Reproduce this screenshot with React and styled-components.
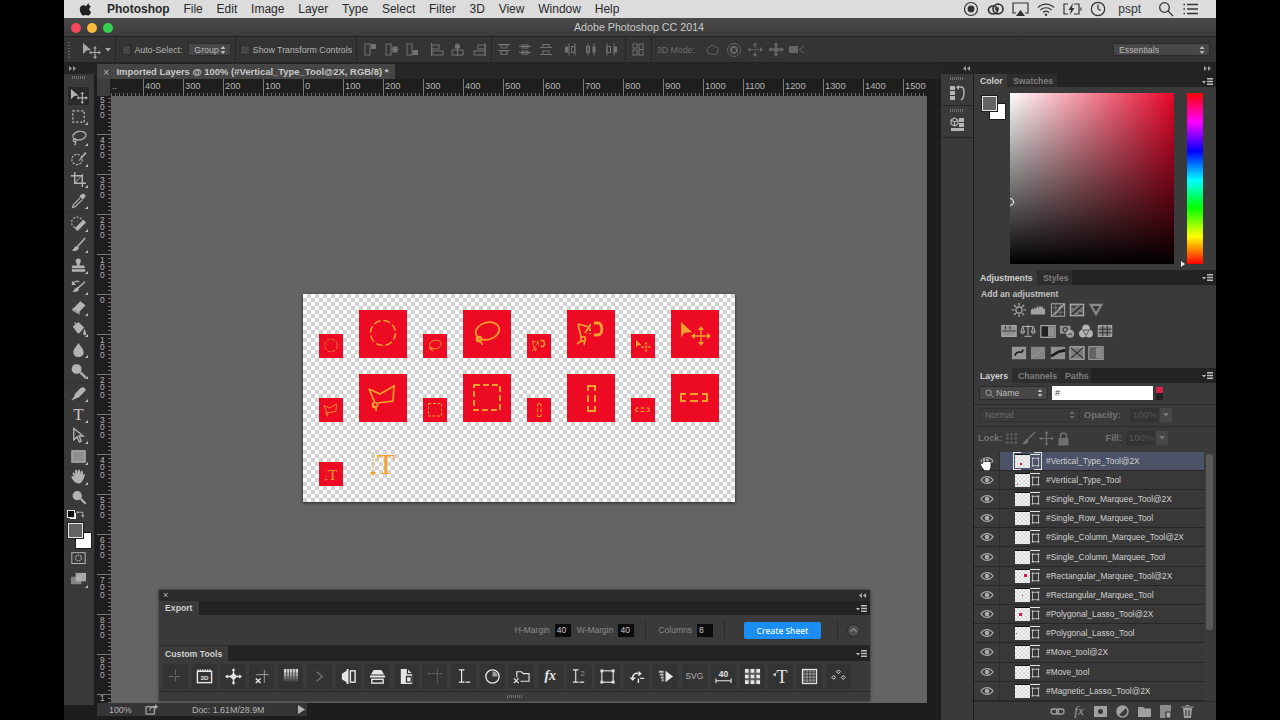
import * as React from 'react';
import styled, { createGlobalStyle } from 'styled-components';

const GlobalStyle = createGlobalStyle`
  html, body { margin: 0; padding: 0; background: #000; height: 100%; overflow: hidden; }
  body { font-family: 'Liberation Sans', Arial, sans-serif; }
  * { box-sizing: border-box; }
`;

const ORANGE = '#f2a02e';

const Screen = styled.div`
  width: 1152px;
  height: 720px;
  margin: 0 auto;
  display: flex;
  flex-direction: column;
  background: #1d1d1d;
  overflow: hidden;
`;

const MenuBar = styled.div`
  height: 18px;
  flex: none;
  display: flex;
  align-items: center;
  padding-left: 16px;
  background: #dcdcdc;
  color: #2a2a2a;
  font-size: 12px;
`;
const MenuItem = styled.span`
  margin-left: ${(p) => p.$gap ?? 13.8}px;
  margin-right: ${(p) => p.$after || 0}px;
  font-weight: ${(p) => (p.$bold ? 700 : 400)};
  white-space: nowrap;
`;
const MenuRight = styled.div`
  margin-left: auto;
  margin-right: 17px;
  display: flex;
  align-items: center;
  gap: 8px;
  color: #333;
`;

const TitleBar = styled.div`
  height: 19px;
  flex: none;
  position: relative;
  display: flex;
  align-items: center;
  justify-content: center;
  padding-right: 2px;
  background: linear-gradient(#4a4a4a, #3b3b3b);
  border-bottom: 1px solid #222;
  color: #c9c9c9;
  font-size: 10.7px;
`;
const Lights = styled.div`
  position: absolute;
  left: 7px;
  top: 5px;
  display: flex;
  gap: 6px;
`;
const Light = styled.i`
  display: block;
  width: 10px;
  height: 10px;
  border-radius: 50%;
  background: ${(p) => p.$c};
`;

const OptionsBar = styled.div`
  height: 26px;
  flex: none;
  display: flex;
  align-items: center;
  background: #343434;
  border-bottom: 1px solid #202020;
  color: #b4b4b4;
  font-size: 8.8px;
  padding-left: 4px;
  padding-right: 6px;
`;
const VGrip = styled.div`
  width: 2px;
  height: 16px;
  margin-right: 12px;
  background: repeating-linear-gradient(#666 0 1px, transparent 1px 3px);
`;
const OptSep = styled.div`
  width: 1px;
  height: 26px;
  margin: ${(p) => p.$m};
  background: #262626;
`;
const Check = styled.i`
  display: block;
  width: 10px;
  height: 10px;
  margin-right: 3px;
  background: #464646;
  border: 1px solid #2a2a2a;
`;
const OptLabel = styled.span`
  white-space: nowrap;
  margin-left: ${(p) => p.$ml || 0}px;
  margin-right: ${(p) => p.$mr || 0}px;
  color: ${(p) => p.$c || 'inherit'};
`;
const Select = styled.div`
  width: ${(p) => p.$w}px;
  height: ${(p) => p.$h || 13}px;
  display: flex;
  flex: none;
  align-items: center;
  justify-content: space-between;
  padding: 0 4px 0 5px;
  background: ${(p) => (p.$off ? '#3a3a3a' : '#474747')};
  border: 1px solid ${(p) => (p.$off ? '#303030' : '#2b2b2b')};
  border-radius: 2px;
  color: ${(p) => (p.$off ? '#6c6c6c' : '#b9b9b9')};
  font-size: 8.8px;
  font-weight: 400;
  margin-left: ${(p) => p.$ml || 0}px;
`;
const AlignSlot = styled.div`
  width: ${(p) => p.$w || 21}px;
  margin-left: ${(p) => p.$ml || 0}px;
  display: flex;
  justify-content: center;
  flex: none;
  color: ${(p) => p.$c || '#737373'};
`;

const Svg = styled.svg`
  display: block;
  flex: none;
  fill: none;
  stroke: currentColor;
  stroke-width: ${(p) => p.$sw || 1.2};
  overflow: visible;
  color: ${(p) => p.$c || 'inherit'};
`;
const GlyphText = styled.text`
  font-family: 'Liberation Serif', serif;
  fill: currentColor;
  stroke: none;
`;
const GlyphSans = styled.text`
  font-family: 'Liberation Sans', sans-serif;
  fill: currentColor;
  stroke: none;
`;

const F = { fill: 'currentColor', stroke: 'none' };

const icons = {
  apple: <path {...F} d="M11.4 1c.1 1-.3 1.800-.8 2.400-.6.700-1.400 1.100-2.200 1-.1-.9.300-1.800.8-2.400C9.800 1.400 10.700 1 11.400 1zM14 11.600c-.4.900-.6 1.300-1.100 2.100-.7 1.100-1.700 2.400-2.900 2.400-1.100 0-1.400-.7-2.800-.7s-1.800.7-2.900.7c-1.200 0-2.100-1.200-2.800-2.300C-.5 10.700-.7 7.100.5 5.300c.9-1.300 2.200-2 3.500-2 1.300 0 2.100.7 3.200.7 1 0 1.700-.7 3.200-.7 1.100 0 2.400.6 3.200 1.700-2.800 1.600-2.400 5.600.4 6.600z" />,
  rec: <g><circle cx="8" cy="8" r="6.500" /><circle {...F} cx="8" cy="8" r="3.400" /></g>,
  cc: <g><ellipse cx="5.500" cy="9" rx="4.500" ry="4" strokeWidth="1.700" /><ellipse cx="10.500" cy="8" rx="5" ry="4.800" strokeWidth="1.700" /><circle {...F} cx="9.500" cy="8" r="2" /></g>,
  airplay: <g><path d="M4 12H1V2h15v10h-3" /><path {...F} d="M8.500 9l4.500 6H4z" /></g>,
  wifi: <g strokeWidth="1.200"><path d="M1 6.500c4.500-4.500 11.500-4.500 16 0M3.500 9c3-3 8-3 11 0M6 11.500c1.700-1.500 4.300-1.500 6 0" /><circle {...F} cx="9" cy="13.800" r="1.200" /></g>,
  battery: <g><path d="M5 3H1v10h4M11 3h5v10h-5M18 6.500v3" /><path {...F} d="M10 2L5.500 9H8l-1 5 4.500-7H9z" /></g>,
  clock: <g><circle cx="8" cy="8" r="6.700" /><path d="M8 3.500V8l2.800 1.500" /></g>,
  search: <g strokeWidth="1.300"><circle cx="6.500" cy="6.500" r="4.800" /><path d="M10 10l5 5" /></g>,
  list: <g strokeWidth="1.300"><path d="M5 3.500h11M5 8h11M5 12.500h11" /><path d="M1.500 3.500h1.500M1.500 8h1.500M1.500 12.500h1.500" /></g>,
  updown: <path {...F} d="M3 0l2.500 3H.5zM3 8L.5 5h5z" />,
  down: <path {...F} d="M0 0h6L3 3.500z" />,
  dblR: <path {...F} d="M0 0l3 2.500L0 5zM4 0l3 2.500L4 5z" />,
  dblL: <path {...F} d="M3 0L0 2.500 3 5zM7 0L4 2.500 7 5z" />,
  panelMenu: <g><path {...F} d="M0 3h4L2 5.500zM5 0h6v1.500H5zM5 2.800h6v1.500H5zM5 5.600h6v1.500H5z" /></g>,

  move: <g><path {...F} d="M1 2v11l3.500-3.500L9 9z" /><path d="M13 7v9M8.500 11.500h9" /><path {...F} d="M13 5l2 2.500h-4zM13 18l-2-2.500h4zM7 11.500l2.500-2v4zM19 11.500l-2.500 2v-4z" /></g>,
  marquee: <rect x="3" y="3" width="12" height="12" strokeWidth="1.400" strokeDasharray="2.500 1.800" />,
  lasso: <g strokeWidth="1.300"><ellipse cx="10" cy="7" rx="7" ry="4.500" transform="rotate(-10 10 7)" /><circle cx="5" cy="12" r="1.600" /><path d="M5.500 13.500c1 1.500 0 3-1 3.500" /></g>,
  quick: <g><circle cx="7.500" cy="10" r="5.500" strokeWidth="1.300" strokeDasharray="2.200 1.500" /><path {...F} d="M16 2l1.500 1.500L11 10.500 8.500 12z" /></g>,
  crop: <g strokeWidth="1.500"><path d="M5 1v12h12M1 5h12v12" /><path d="M14 3L4 14" strokeWidth="1" /></g>,
  eyedrop: <g><path {...F} d="M12 2.500c1-1 2.500-1 3.500 0s1 2.500 0 3.500l-2 2-3.500-3.500z" /><path d="M11 6l-7.500 7.500-.8 2.800 2.800-.8L13 8" /></g>,
  heal: <g><circle cx="7.500" cy="8" r="5.800" strokeWidth="1.200" strokeDasharray="2.200 1.500" /><path {...F} d="M14 5l3 3-9 9-3-3z" /></g>,
  brush: <g><path d="M16 2L8 11" strokeWidth="1.600" /><path {...F} d="M7.500 10.500c-3 0-3 3-5.500 5 3 1 6.500 0 7.500-3z" /></g>,
  stamp: <g><path {...F} d="M9 1.500c1.500 0 2.500 1 2.500 2.500 0 2-1.500 3-1.500 5h4c1 0 1.500.5 1.500 1.500V12H2v-1.500C2 9.500 2.500 9 3.500 9h4c0-2-1.500-3-1.500-5 0-1.500 1.500-2.500 3-2.500zM2 13h14v2.500H2z" /></g>,
  historyB: <g><path d="M16 4L8 11" strokeWidth="1.500" /><path {...F} d="M8 10c-3 0-3 3-5.500 4.500 3 1 6.500 0 7-2.500z" /><path d="M3 6c2-2.500 5-3 7-2" /><path {...F} d="M2 3v4.500h4.500z" /></g>,
  eraser: <g><path {...F} d="M11 2.500l5.500 4-7 7.500-6-4z" /><path d="M3.500 10l6 4 0 1.500-6.500-3.500z" /></g>,
  bucket: <g><path {...F} d="M3 7l6-5 6 6-5 6H8zM15 9c1 2.500 2.500 4 2 6-.5 1.500-2.500 1.500-3 0-.3-1.500 1-3 1-6z" /><path d="M5 2.500l3 4" /></g>,
  blur: <path {...F} d="M9 2c1.500 3 5.500 6 5.500 10 0 3-2.500 5-5.500 5s-5.500-2-5.500-5C3.500 8 7.500 5 9 2z" />,
  smudge: <g><circle {...F} cx="7" cy="7.500" r="5.200" /><path d="M11 11l5.500 5.500" strokeWidth="2.400" /></g>,
  pen: <g><path {...F} d="M14 2l3 3-2 2.500-5.500 5.500-6.500 2.500 2.500-6.500L11 3.500z" /><path d="M2 16l5-5" /></g>,
  direct: <path strokeWidth="1.400" d="M4 1.500v12l3.500-3 2.500 5.500 2-1-2.500-5.500h4.500z" />,
  rectT: <g><rect {...F} x="2" y="3" width="14" height="12" opacity="0.700" /><rect x="2" y="3" width="14" height="12" /></g>,
  hand: <g><path {...F} d="M5 9c-1-2-3-4-2-5s2 .5 3 2c-1-3-1-4.500 0-5s2 1 2.500 4c0-3 0-4.500 1-4.500s1.500 1.500 1.500 4.500c.5-2 1-3.500 2-3s1 2 .5 5l1-1.500c1-.5 1.500 .5 1 2-1 3-2 6-5 7.500-3 1-6-1-7.500-3.500C2 10 1 8 2 7.500S4 8 5 9z" /></g>,
  screen: <g><rect {...F} x="1" y="6" width="11" height="8" opacity="0.600" /><rect {...F} x="6" y="2" width="11" height="9" opacity="0.900" /></g>,
  qmask: <g><rect x="1" y="2" width="16" height="13" /><circle cx="9" cy="8.500" r="3.500" strokeDasharray="2 1" strokeWidth="1.400" /></g>,
  swap: <g><path d="M3 3h6v5" /><path {...F} d="M9 10L6.500 7h5zM0 3l3-2v4z" /></g>,

  a1: <g><rect x="3" y="2" width="5" height="11" /><rect {...F} x="9" y="2" width="5" height="5" /></g>,
  a2: <g><rect x="3" y="2" width="5" height="11" /><rect {...F} x="9.500" y="4.500" width="5" height="6" /><path d="M8 7.500h8" /></g>,
  a3: <g><rect x="3" y="2" width="5" height="11" /><rect {...F} x="9" y="8" width="5" height="5" /></g>,
  a4: <g><path d="M3.500 1v13" /><rect x="4" y="3" width="7" height="4" /><rect x="4" y="9" width="11" height="4" /></g>,
  a5: <g><path d="M8.500 1v13" /><rect {...F} x="6" y="2.500" width="5" height="4" /><rect x="3" y="8" width="11" height="5" /></g>,
  a6: <g><path d="M15 1v13" /><rect x="8" y="3" width="7" height="4" /><rect x="4" y="9" width="11" height="4" /></g>,
  d1: <g><path d="M3 2.500h12M3 8.500h12" /><rect x="6" y="3" width="6" height="3" /><rect x="6" y="9" width="6" height="3.500" /></g>,
  d2: <g><path d="M3 4.500h12M3 10.500h12" /><rect x="6" y="3" width="6" height="3" /><rect x="6" y="9" width="6" height="3" /></g>,
  d3: <g><path d="M3 5.500h12M3 12.500h12" /><rect x="6" y="2.500" width="6" height="3" /><rect x="6" y="9" width="6" height="3.500" /></g>,
  h1: <g transform="rotate(90 9 7.500)"><path d="M3 2.500h12M3 8.500h12" /><rect x="6" y="3" width="6" height="3" /><rect {...F} x="6" y="9" width="6" height="3.500" /></g>,
  h2: <g transform="rotate(90 9 7.500)"><path d="M3 4.500h12M3 10.500h12" /><rect {...F} x="6" y="3" width="6" height="3" /><rect x="6" y="9" width="6" height="3" /></g>,
  h3: <g transform="rotate(90 9 7.500)"><path d="M3 5.500h12M3 12.500h12" /><rect {...F} x="6" y="2.500" width="6" height="3" /><rect x="6" y="9" width="6" height="3.500" /></g>,
  d4: <g><rect x="4" y="2" width="4" height="4" /><rect x="4" y="8" width="4" height="5" /><rect x="10" y="2" width="4" height="11" /><path d="M10 7.500h4" /></g>,
  m1: <g><path d="M3 8c0-3 4-3 5-5 2 0 2 2 4 2 3 0 3 3 1 4 2 3-2 4-4 3-3 1-6-1-6-4z" /></g>,
  m2: <g><circle cx="9" cy="8" r="6.500" /><circle cx="9" cy="8" r="3" strokeWidth="2" /></g>,
  m3: <g><path strokeDasharray="2 1" d="M9 1v13M2 7.500h14" /><path {...F} d="M9 .5l2.500 3h-5zM9 15l-2.500-3h5zM1.500 7.500l3-2.500v5zM17 7.500l-3 2.500V5z" /></g>,
  m4: <g><path d="M9 1v13M2 7.500h14" strokeWidth="1.800" /><circle {...F} cx="9" cy="7.500" r="2.500" /><path {...F} d="M9 .5l2.500 3h-5zM9 15l-2.500-3h5zM1.500 7.500l3-2.500v5zM17 7.500l-3 2.500V5z" /></g>,
  m5: <g><rect {...F} x="1" y="4" width="9" height="7" /><path d="M11 7.500l5-3.500M11 7.500l5 3.500" /></g>,

  ctCross: <g strokeWidth="1"><path d="M9 2v14M2 9h14" strokeDasharray="5 2" /></g>,
  ct3d: <g><rect x="1.500" y="3.500" width="15" height="12" strokeWidth="1.500" /><path d="M1.500 2.500h15" strokeDasharray="1.500 1" strokeWidth="1.600" /><GlyphSans x="9" y="13" fontSize="6.500" textAnchor="middle" fontWeight="700">3D</GlyphSans></g>,
  ctStar: <g><path d="M9 1v16M1 9h16" strokeWidth="1.400" /><path {...F} d="M9 5l4 4-4 4-4-4z" /><path {...F} d="M9 0l2 3H7zM9 18l-2-3h4zM0 9l3-2v4zM18 9l-3 2V7z" /></g>,
  ctX: <g><path d="M12 2v14M3 7h14" strokeWidth="1" opacity="0.600" /><path d="M3 11l5 5M8 11l-5 5" strokeWidth="1.500" /></g>,
  ctGrid: <g>
    <rect {...F} x="2" y="1" width="15" height="4" opacity="0.900" />
    <rect {...F} x="2" y="5" width="15" height="4" opacity="0.600" />
    <rect {...F} x="2" y="9" width="15" height="3" opacity="0.350" />
    <rect {...F} x="2" y="12" width="15" height="2" opacity="0.180" />
    <path stroke="#383838" strokeWidth="0.800" d="M5 1v13M8 1v13M11 1v13M14 1v13" />
  </g>,
  ctChev: <path strokeWidth="1.500" d="M6 4l6 5-6 5" />,
  ctMirH: <g><path {...F} d="M2 6l5-3v12l-5-3zM7 1h2v16H7z" /><rect x="11" y="3" width="5" height="12" strokeWidth="1.500" /></g>,
  ctMirV: <g><path {...F} d="M5 2h8l3 5H2zM1 8h16v2H1z" /><rect x="3" y="12" width="12" height="4" strokeWidth="1.500" /></g>,
  ctDoc: <g><path {...F} d="M3 1h7l5 5v11H3z" /><path stroke="#383838" strokeWidth="1.400" d="M9 9h5v6H9zM10 1v5h5" /></g>,
  ctDim: <g strokeWidth="1"><path d="M12 1v15M2 6h15" strokeDasharray="3 1" /></g>,
  ctI: <g strokeWidth="1.300"><path d="M4 2h6M7 2v13M4 15h6M11 15h5" /></g>,
  ctPie: <g><circle cx="9" cy="9" r="7" strokeWidth="1.400" /><path {...F} opacity="0.600" d="M9 9V3.500A5.500 5.500 0 0 1 14.500 9z" /></g>,
  ctFold: <g strokeWidth="1.200"><path d="M4 10V4h5l2 2h6v8H8" /><path strokeWidth="1.400" d="M1 11l5 5M6 11l-5 5" /></g>,
  ctI2: <g><path strokeWidth="1.200" d="M2 2h6M5 2v13M2 15h6M9 15h5" /><GlyphSans x="10" y="8" fontSize="8" opacity="0.500">2</GlyphSans></g>,
  ctRect: <g><rect x="3" y="3" width="12" height="12" strokeWidth="1.200" /><path {...F} d="M1.500 1.500h3v3h-3zM13.500 1.500h3v3h-3zM1.500 13.500h3v3h-3zM13.500 13.500h3v3h-3z" /></g>,
  ctRot: <g strokeWidth="1.500"><path d="M5 11c-.5-4 3-6.500 6-5" /><path {...F} d="M11 3l3.500 3L11 9zM1.500 10h7l-3.500 3.500z" /><path d="M11 11v5M13 11h4" /></g>,
  ctFwd: <g><path {...F} d="M9 3l8 6-8 6z" /><path {...F} opacity="0.800" d="M2 3h5v2H2zM3 6h4v2H3zM4 9h3v2H4zM5 12h2v2H5z" /></g>,
  ctMeasure: <g strokeWidth="1.200"><path d="M1 11v5M17 11v5M1 13.500h16" /><GlyphSans x="9" y="9" fontSize="9" fontWeight="700" textAnchor="middle">40</GlyphSans></g>,
  ctSq: <g><rect {...F} x="1" y="1" width="16" height="16" /><path stroke="#383838" strokeWidth="2.200" opacity="0.800" d="M6 1v16M12 1v16M1 6h16M1 12h16" /></g>,
  ctT: <g><GlyphText x="10.500" y="15.500" fontSize="19" textAnchor="middle">T</GlyphText><path {...F} d="M1 7l3-2v4z" /></g>,
  ctTable: <g><rect {...F} opacity="0.500" x="1.500" y="1.500" width="15" height="15" /><path stroke="#3a3a3a" strokeWidth="0.800" d="M4.500 1v16M8 1v16M11.500 1v16M15 1v16M1 4.500h16M1 8h16M1 11.500h16M1 15h16" /><rect x="1.500" y="1.500" width="15" height="15" /></g>,
  ctDia: <g strokeWidth="1"><path d="M9 2l2 2-2 2-2-2zM4 8l2 2-2 2-2-2zM14 8l2 2-2 2-2-2z" /></g>,

  hist: <g><path {...F} d="M1 1h5v4H1zM1 6h5v4H1zM1 11h5v4H1z" /><path strokeWidth="1.500" d="M8 2h4c2 0 3 2 3 5 0 4-1 7-3 8" /><path {...F} d="M10 0v5l-3-2.500z" /></g>,
  props: <g><path {...F} d="M9 1h5v4H9zM9 6h5v4H9zM1 11h13v3H1z" /><path d="M4.500 1L8 3v4L4.500 9 1 7V3zM1 3l3.500 2L8 3M4.500 5v4" /></g>,

  adjSun: <g><circle cx="9" cy="9" r="3.500" /><path strokeWidth="1.400" d="M9 1v3M9 14v3M1 9h3M14 9h3M3.300 3.300l2.200 2.200M12.500 12.500l2.200 2.200M3.300 14.700l2.200-2.200M12.500 5.500l2.200-2.200" /></g>,
  adjLevels: <path {...F} d="M1 14V9l2-2 1 2 1-3 2 2 1-4 2 3 1-3 2 2 1-1 1 3 2-1v7z" opacity="0.850" />,
  adjCurves: <g strokeWidth="1"><rect x="1.500" y="2" width="15" height="14" /><path d="M6.500 2v14M11.500 2v14M1.500 6.500h15M1.500 11.500h15" opacity="0.500" /><path strokeWidth="1.400" d="M2 15c5 0 8-9 14-12" /></g>,
  adjExpo: <g><rect {...F} x="1.500" y="2.500" width="15" height="13" opacity="0.450" /><rect x="1.500" y="2.500" width="15" height="13" /><path stroke="#222" strokeWidth="1.400" d="M3 14L15 4M3 5.500h4M11 12.500h4" /></g>,
  adjVib: <path stroke="none" fill="#8b8b8b" d="M1 2h16L9 16zm4 2.500L9 11l4-6.500z" />,
  adjHue: <g><rect {...F} x="1" y="3" width="16" height="12" opacity="0.700" /><rect x="1" y="3" width="16" height="12" /><path stroke="#333" strokeWidth="1.200" d="M5 3v4M10 3v4" /><path stroke="#333" strokeWidth="1" d="M1 9h16" /></g>,
  adjBal: <g strokeWidth="1.100"><path d="M9 2v12M5 15h8M3 4h12" /><path d="M3 4L1 10h4zM15 4l-2 6h4zM1 10c0 2.500 4 2.500 4 0M13 10c0 2.500 4 2.500 4 0" /></g>,
  adjBW: <g><rect x="1" y="3" width="16" height="13" strokeWidth="1.300" /><rect fill="#222" stroke="none" x="2" y="4" width="7" height="11" /><rect {...F} x="9" y="4" width="7" height="11" opacity="0.700" /></g>,
  adjPhoto: <g><rect {...F} opacity="0.700" x="1" y="3" width="12" height="9" /><circle cx="7" cy="7.500" r="2.500" stroke="#333" /><circle {...F} opacity="0.800" cx="12.500" cy="12" r="4.500" /><path stroke="#333" d="M10.500 12.500h4" /></g>,
  adjMixer: <g><circle {...F} cx="9" cy="6" r="4.300" /><circle {...F} cx="5.500" cy="12" r="4.300" /><circle {...F} cx="12.500" cy="12" r="4.300" /><path stroke="#333" strokeWidth="0.800" d="M5.500 8l7 0M9 14l-3.500-6M9 14l3.500-6" /></g>,
  adjLUT: <g><rect {...F} opacity="0.600" x="1.500" y="3" width="15" height="12" /><rect x="1.500" y="3" width="15" height="12" /><path stroke="#333" d="M6.500 3v12M11.500 3v12M1.500 7h15M1.500 11h15" /></g>,
  adjInv: <g><rect {...F} opacity="0.750" x="1" y="2" width="16" height="14" /><path stroke="#222" strokeWidth="2" d="M5 12c-1-3 3-4 4-4s5 1 4-3" /></g>,
  adjPost: <g><rect {...F} opacity="0.600" x="1" y="2" width="16" height="14" /><path stroke="#8f8f8f" strokeWidth="2" d="M2 14L16 4" /></g>,
  adjThresh: <g><rect {...F} opacity="0.700" x="1" y="2" width="16" height="14" /><path stroke="#1c1c1c" strokeWidth="3" d="M1 12c5 0 4-5 16-6" /></g>,
  adjMap: <g><rect {...F} opacity="0.550" x="1" y="2" width="16" height="14" /><path stroke="#2a2a2a" strokeWidth="1.200" d="M1 2l16 14M17 2L1 16" /><rect x="1" y="2" width="16" height="14" /></g>,
  adjGrad: <g><rect x="1" y="2" width="16" height="14" /><rect {...F} opacity="0.350" x="2" y="3" width="7" height="12" /><rect {...F} opacity="0.650" x="9" y="3" width="7" height="12" /></g>,

  checker: <g><rect {...F} opacity="0.600" x="2" y="2" width="11" height="11" /><path stroke="#383838" strokeWidth="1.500" d="M5.500 2v11M9.500 2v11M2 5.500h11M2 9.500h11" /></g>,
  lockBrush: <g><path strokeWidth="1.500" d="M14 1L6 9" /><path {...F} d="M6 8c-2.500 0-2 3-5 5 3 .5 5.500 0 6.500-3z" /></g>,
  lockMove: <g><path d="M7.500 1v13M1 7.500h13" /><path {...F} d="M7.500 0l2 2.500h-4zM7.500 15l-2-2.500h4zM0 7.500l2.500-2v4zM15 7.500l-2.500 2v-4z" /></g>,
  lock: <g><path strokeWidth="1.500" d="M4.500 7V5c0-4 6-4 6 0v2" /><path {...F} d="M2.500 7h10v7.500h-10z" /></g>,
  eye: <g strokeWidth="1.300"><path d="M1 6c3-4.500 9-4.500 12 0-3 4.500-9 4.500-12 0z" /><circle {...F} cx="7" cy="6" r="2.300" /></g>,
  handCur: <path fill="#fff" stroke="#111" strokeWidth="0.800" d="M3 7V2c0-1.300 2-1.300 2 0v4c0-1.300 2-1.300 2 0 0-1 2-1 2 0 0-.8 2-.8 2 .3v4c0 2-1 4-2 4.500H4.500C3 13 1 10.500.5 9c-.5-1.500 1-2 1.500-1.500z" />,
  mini: <g strokeWidth="1"><rect x="1.500" y="1.500" width="7" height="9" /><path {...F} d="M.5.500h2v2h-2zM7.500.500h2v2h-2zM.5 9.500h2v2h-2zM7.500 9.500h2v2h-2z" /></g>,
  link: <g strokeWidth="1.300"><rect x="1" y="4" width="7.500" height="5" rx="2.500" /><rect x="6.500" y="4" width="7.500" height="5" rx="2.500" /></g>,
  mask: <g><rect {...F} x="1" y="2" width="13" height="11" /><circle cx="7.500" cy="7.500" r="2.500" fill="#383838" stroke="none" /></g>,
  half: <g><circle cx="7.500" cy="7.500" r="5.500" strokeWidth="1.500" /><path {...F} d="M3.500 11.500a5.500 5.500 0 0 1 8-8z" /></g>,
  folder: <path {...F} d="M1 3h5l1.500 1.500H14V13H1z" />,
  fresh: <g><path {...F} d="M2 1h11v13H2z" opacity="0.800" /><path stroke="#383838" fill="#aaa" d="M8 8h5v6H8z" /></g>,
  trash: <g><path {...F} d="M3 4h9l-1 10H4zM1.500 2.500h12V3.500h-12zM6 1h3v1H6z" /><path stroke="#383838" d="M6 6v6M9 6v6" /></g>,
  exportI: <g><rect x="1" y="3" width="9" height="8" /><path {...F} d="M11 0l3 3-3 3z" /><path d="M5 7c0-3 2-4 7-4" /></g>,
  play: <path {...F} d="M0 0l7 4.500L0 9z" />,
};

function Icon({ name, w = 18, h = 18, vw, vh, c, sw }) {
  return (
    <Svg width={w} height={h} viewBox={`0 0 ${vw || w} ${vh || h}`} $c={c} $sw={sw} aria-hidden="true">
      {icons[name]}
    </Svg>
  );
}

const Workspace = styled.div`
  flex: 1;
  min-height: 0;
  display: flex;
`;

/* left tool column */
const ToolColumn = styled.div`
  width: 33px;
  flex: none;
  display: flex;
  flex-direction: column;
`;
const CollapseStrip = styled.div`
  height: 11px;
  flex: none;
  display: flex;
  align-items: center;
  justify-content: ${(p) => p.$justify || 'flex-start'};
  padding: 0 5px 0 ${(p) => p.$pl || 5}px;
  color: #9a9a9a;
  background: #242424;
`;
const ToolBody = styled.div`
  width: 30px;
  height: 631px;
  flex: none;
  display: flex;
  flex-direction: column;
  align-items: stretch;
  background: #3a3a3a;
  color: #b4b4b4;
`;
const HGrip = styled.div`
  height: 3px;
  width: ${(p) => p.$w || 14}px;
  margin: ${(p) => p.$m || '2px auto 6px'};
  flex: none;
  background: repeating-linear-gradient(90deg, #6f6f6f 0 1px, transparent 1px 2px);
`;
const ToolGroup = styled.div`
  display: flex;
  flex-direction: column;
  border-bottom: ${(p) => (p.$last ? 'none' : '1px solid #333')};
  padding-bottom: ${(p) => (p.$last ? 0 : 1)}px;
  margin-top: ${(p) => (p.$last ? -2 : 0)}px;
`;
const ToolBtn = styled.div`
  position: relative;
  width: 21px;
  height: ${(p) => (p.$active ? 18 : p.$h || 21)}px;
  margin: ${(p) => (p.$active ? '1.500px 0 1.500px 4px' : '0 0 0 4px')};
  display: flex;
  align-items: center;
  justify-content: center;
  background: ${(p) => (p.$active ? '#292929' : 'transparent')};
  &::after {
    content: '';
    display: ${(p) => (p.$fly ? 'block' : 'none')};
    position: absolute;
    right: 1px;
    bottom: 2px;
    border-left: 3px solid transparent;
    border-bottom: 3px solid #bdbdbd;
  }
`;
const ToolSerif = styled.span`
  font-family: 'Liberation Serif', serif;
  font-size: 17px;
  line-height: 17px;
  color: #c4c4c4;
`;
const MiniSwatchRow = styled.div`
  height: 11px;
  margin: 1.500px 0 0 0;
  display: flex;
  align-items: center;
  justify-content: space-between;
  width: 21px;
`;
const MiniDefault = styled.div`
  width: 6px;
  height: 6px;
  position: relative;
  background: #fff;
  margin: 3px 0 0 6px;
  &::before {
    content: '';
    position: absolute;
    left: -3px;
    top: -3px;
    width: 6px;
    height: 6px;
    background: #111;
    border: 1px solid #ddd;
  }
`;
const SwatchStack = styled.div`
  position: relative;
  width: ${(p) => p.$w}px;
  height: ${(p) => p.$h}px;
  margin: ${(p) => p.$m};
  flex: none;
`;
const SwatchFg = styled.div`
  position: absolute;
  left: 0;
  top: 0;
  width: ${(p) => p.$s}px;
  height: ${(p) => p.$s}px;
  background: #636363;
  border: 1px solid #e8e8e8;
  outline: 1px solid #1c1c1c;
  z-index: 1;
`;
const SwatchBg = styled.div`
  position: absolute;
  right: 0;
  bottom: 0;
  width: ${(p) => p.$s}px;
  height: ${(p) => p.$s}px;
  background: #fff;
  outline: 1px solid #1c1c1c;
`;

/* document area */
const Center = styled.div`
  width: 844px;
  flex: none;
  display: flex;
  flex-direction: column;
  padding-right: 14px;
`;
const TabRow = styled.div`
  height: 16px;
  flex: none;
  display: flex;
  background: #262626;
  margin-right: -14px;
`;
const DocTab = styled.div`
  width: 298px;
  margin-top: 1px;
  display: flex;
  align-items: center;
  padding-left: 6px;
  background: #454545;
  color: #c8c8c8;
  font-size: 9.450px;
  font-weight: 700;
  white-space: nowrap;
`;
const TabX = styled.span`
  color: #b0b0b0;
  font-size: 11px;
  font-weight: 400;
  margin-right: 7px;
`;
const HRulerRow = styled.div`
  height: 17px;
  flex: none;
  display: flex;
`;
const RulerCorner = styled.div`
  width: 14px;
  flex: none;
  background: #3d3d3d;
  border-right: 1px solid #222;
`;
const HRuler = styled.div`
  flex: 1;
  display: flex;
  overflow: hidden;
  color: #b5b5b5;
  font-size: 9.300px;
  background-color: #1e1e1e;
  background-image: repeating-linear-gradient(90deg, #6a6a6a 0 1px, transparent 1px 4px);
  background-size: 100% 3px;
  background-position: 0 100%;
  background-repeat: no-repeat;
`;
const HCell = styled.div`
  width: ${(p) => p.$w || 40}px;
  flex: none;
  padding: 2px 0 0 1px;
  border-left: ${(p) => (p.$first ? 'none' : '1px solid #777')};
  line-height: 10px;
`;
const DocRow = styled.div`
  height: 607px;
  flex: none;
  display: flex;
`;
const VRuler = styled.div`
  width: 14px;
  flex: none;
  overflow: hidden;
  display: flex;
  flex-direction: column;
  color: #b5b5b5;
  font-size: 8.400px;
  background-color: #1e1e1e;
  background-image: repeating-linear-gradient(#6a6a6a 0 1px, transparent 1px 4px);
  background-size: 3px 100%;
  background-position: 100% 2px;
  background-repeat: no-repeat;
`;
const VCell = styled.div`
  height: 40px;
  flex: none;
  border-top: 1px solid #777;
  padding: 2px 0 0 3px;
  width: 100%;
  &:first-child {
    margin-top: -2px;
  }
  &:last-child {
    height: 9px;
    padding-top: 0;
  }
`;
const VLabel = styled.div`
  width: 6px;
  line-height: 7.300px;
  word-break: break-all;
`;
const DocArea = styled.div`
  position: relative;
  flex: 1;
  background: #646464;
  display: flex;
  justify-content: center;
  align-items: flex-start;
  padding-top: 198px;
`;
const Canvas = styled.div`
  width: 432px;
  height: 208px;
  padding: 16px;
  display: flex;
  flex-wrap: wrap;
  align-items: flex-end;
  align-content: flex-start;
  gap: 16px;
  background-color: #fff;
  background-image: conic-gradient(#d2d2d2 25%, #fbfbfb 0 50%, #d2d2d2 0 75%, #fbfbfb 0);
  background-size: 8px 8px;
  box-shadow: 0 1px 3px rgba(0, 0, 0, 0.6);
`;
const Tile = styled.div`
  width: ${(p) => p.$size}px;
  height: ${(p) => p.$size}px;
  flex: none;
  background: ${(p) => (p.$clear ? 'transparent' : '#ec0b22')};
  color: ${ORANGE};
`;
const SpriteSvg = styled.svg`
  display: block;
  width: 100%;
  height: 100%;
  fill: none;
  stroke: currentColor;
  stroke-width: 1.500;
`;
const sprites = {
  circle: <circle cx="24" cy="23" r="12.500" strokeDasharray="7 2.800" />,
  lasso: <g strokeWidth="1.700"><ellipse cx="24.500" cy="21" rx="12" ry="8.500" transform="rotate(-15 24.500 21)" /><circle cx="16" cy="29" r="2.500" /><path d="M14 28c1 3 6 4 5 7" /></g>,
  magnet: <g strokeWidth="1.700"><path d="M11 14l11 3-4 6" /><path d="M11 14l3 13" /><circle cx="16" cy="29" r="2.300" /><path d="M14 31l-4 3M18 30l-1 5" /><path strokeDasharray="2.500 2" strokeWidth="2" d="M23 14v10" /><path strokeWidth="3" d="M27 13h4c5 0 5 12 0 12h-4" /></g>,
  move: <g strokeWidth="1.300"><path fill={ORANGE} stroke="none" d="M10 12v16l3-5 8-1z" /><path d="M30 18v16M22 26h16" /><path fill={ORANGE} stroke="none" d="M30 16l3 4h-6zM30 36l-3-4h6zM20 26l4-3v6zM40 26l-4 3v-6z" /></g>,
  poly: <g strokeWidth="1.700"><path d="M10 15l11 5 14-8-1 15-15 2" /><path d="M10 15l6 14" /><circle cx="16" cy="31" r="2.500" /><path d="M14 31c2 2 4 3 3 6" /></g>,
  rect: <rect x="11" y="11" width="26" height="25" strokeWidth="2" strokeDasharray="6 3" />,
  col: <g strokeWidth="2"><path d="M21 17v-5h7v5M21 32v5h7v-5M21 21v7M28 21v7" /></g>,
  row: <g strokeWidth="2"><path d="M15 20h-5v7h5M31 20h5v7h-5M19 20h8M19 27h8" /></g>,
};
function Sprite({ name }) {
  return (
    <SpriteSvg viewBox="0 0 48 48" aria-hidden="true">
      {name === 'type' ? (
        <g>
          <GlyphText x="27" y="36" fontSize="30" textAnchor="middle">T</GlyphText>
          <path strokeDasharray="2 1.500" strokeWidth="1.300" d="M14 14v21" opacity="0.800" />
          <path fill={ORANGE} stroke="none" d="M14 38l-3-4h6z" />
        </g>
      ) : (
        sprites[name]
      )}
    </SpriteSvg>
  );
}

/* floating panel */
const FloatPanel = styled.div`
  position: absolute;
  left: 48px;
  top: 494px;
  width: 711px;
  height: 111px;
  display: flex;
  flex-direction: column;
  background: #3a3a3a;
  box-shadow: 0 0 3px rgba(0, 0, 0, 0.6);
  color: #9a9a9a;
`;
const FloatTop = styled.div`
  height: 11px;
  flex: none;
  display: flex;
  align-items: center;
  justify-content: space-between;
  padding: 0 4px;
  background: #2a2a2a;
  color: #bbb;
  font-size: 9px;
  line-height: 9px;
`;
const TabStrip = styled.div`
  height: ${(p) => p.$h || 15}px;
  flex: none;
  display: flex;
  align-items: stretch;
  background: #232323;
  position: relative;
`;
const PanelTab = styled.div`
  display: flex;
  align-items: center;
  padding: 0 ${(p) => p.$pad ?? 6}px;
  font-size: 8.700px;
  font-weight: 700;
  white-space: nowrap;
  background: ${(p) => (p.$on ? '#3a3a3a' : '#2d2d2d')};
  color: ${(p) => (p.$on ? '#d0d0d0' : '#7f7f7f')};
  width: ${(p) => (p.$w ? `${p.$w}px` : 'auto')};
`;
const MenuSlot = styled.div`
  position: absolute;
  right: 3px;
  top: 4px;
  color: #bcbcbc;
`;
const ExportBody = styled.div`
  height: 31px;
  flex: none;
  display: flex;
  align-items: center;
  justify-content: flex-end;
  padding-right: 10px;
  font-size: 8.500px;
  color: #8a8a8a;
  border-bottom: 1px solid #2c2c2c;
`;
const Field = styled.div`
  width: 16px;
  height: 13px;
  margin: 0 6px 0 5px;
  background: #0b0b0b;
  color: #c9c9c9;
  font-size: 8.500px;
  font-weight: 400;
  display: flex;
  align-items: center;
  padding-left: 2px;
`;
const FloatSep = styled.div`
  width: 1px;
  height: 18px;
  background: #2b2b2b;
  margin: ${(p) => p.$m};
`;
const PrimaryBtn = styled.button`
  width: 77px;
  height: 17px;
  padding: 0;
  border: 0;
  border-radius: 2px;
  background: #1a8ef2;
  color: #e8f4ff;
  font-family: 'Open Sans', sans-serif;
  font-size: 8.400px;
  font-weight: 600;
`;
const RoundBtn = styled.div`
  width: 13px;
  height: 13px;
  border-radius: 50%;
  background: #505050;
  border: 1px solid #2a2a2a;
  display: flex;
  align-items: center;
  justify-content: center;
  &::after {
    content: '';
    width: 4px;
    height: 4px;
    margin-top: 2px;
    border-left: 1px solid #999;
    border-top: 1px solid #999;
    transform: rotate(45deg);
  }
`;
const CustomRow = styled.div`
  height: 31px;
  flex: none;
  display: flex;
  align-items: center;
  gap: 3.830px;
  padding-left: 4px;
  border-bottom: 1px solid #2b2b2b;
`;
const CustomBtn = styled.div`
  width: 25px;
  height: 25px;
  flex: none;
  display: flex;
  align-items: center;
  justify-content: center;
  background: #333333;
  border-radius: 3px;
  color: ${(p) => (p.$dim ? '#6f6f6f' : '#e6e6e6')};
`;
const SvgWord = styled.span`
  font-size: 8.500px;
  font-weight: 400;
  color: #b0b0b0;
`;
const FxWord = styled.span`
  font-family: 'Liberation Serif', serif;
  font-style: italic;
  font-weight: 700;
  font-size: 14px;
  color: #e6e6e6;
`;

/* status */
const StatusBar = styled.div`
  height: 13px;
  flex: none;
  display: flex;
  align-items: center;
  font-size: 8.900px;
  color: #b3b3b3;
  background: #1d1d1d;
`;
const StatusLeft = styled.div`
  width: 210px;
  height: 100%;
  display: flex;
  align-items: center;
  padding-left: 12px;
  background: #353535;
  flex: none;
`;
const StatusZoom = styled.span`
  width: 36px;
`;
const StatusDoc = styled.span`
  margin-left: 33px;
  white-space: nowrap;
  width: 106px;
`;

/* right dock */
const Dock = styled.div`
  width: 275px;
  flex: none;
  display: flex;
  flex-direction: column;
`;
const DockRows = styled.div`
  flex: 1;
  min-height: 0;
  display: flex;
`;
const IconDock = styled.div`
  width: 33px;
  flex: none;
  background: #3a3a3a;
  border-right: 1px solid #1c1c1c;
  color: #b4b4b4;
`;
const IconDockGroup = styled.div`
  height: 32px;
  border-bottom: 1px solid #272727;
  display: flex;
  flex-direction: column;
  align-items: center;
`;
const Panels = styled.div`
  flex: 1;
  min-width: 0;
  display: flex;
  flex-direction: column;
  background: #1f1f1f;
`;
const ColorBody = styled.div`
  height: 183px;
  flex: none;
  display: flex;
  background: #3a3a3a;
  padding: 6px 0 0 8px;
`;
const GradField = styled.div`
  position: relative;
  width: 164px;
  height: 171px;
  flex: none;
  margin-left: 5px;
  overflow: hidden;
  background:
    linear-gradient(to top, #000, transparent),
    linear-gradient(to right, #fff, #e8062a);
`;
const PickerRing = styled.i`
  position: absolute;
  left: -4px;
  top: 105px;
  width: 8px;
  height: 8px;
  border: 1px solid #fff;
  border-radius: 50%;
`;
const HueBar = styled.div`
  position: relative;
  width: 16px;
  height: 171px;
  flex: none;
  margin-left: 13px;
  background: linear-gradient(#f00 0%, #f0f 17%, #00f 34%, #0ff 51%, #0f0 67%, #ff0 84%, #f00 100%);
  &::before {
    content: '';
    position: absolute;
    left: -6px;
    bottom: -3px;
    width: 0;
    height: 0;
    border-left: 4px solid #eee;
    border-top: 3px solid transparent;
    border-bottom: 3px solid transparent;
  }
`;
const AdjustBody = styled.div`
  height: 83px;
  flex: none;
  background: #3a3a3a;
  padding: 4px 0 0 7px;
  color: #b5b5b5;
`;
const AdjustTitle = styled.div`
  font-size: 8.600px;
  font-weight: 700;
  color: #c2c2c2;
  line-height: 11px;
  margin-bottom: -1px;
`;
const AdjustRow = styled.div`
  height: 21.500px;
  display: flex;
  align-items: center;
  gap: 3.300px;
  padding-left: ${(p) => p.$pl}px;
`;
const LayersBody = styled.div`
  flex: 1;
  min-height: 0;
  display: flex;
  flex-direction: column;
  background: #3a3a3a;
`;
const FilterRow = styled.div`
  height: ${(p) => p.$h}px;
  flex: none;
  display: flex;
  align-items: center;
  padding-left: ${(p) => p.$pl ?? 5}px;
  padding-bottom: ${(p) => p.$pb || 0}px;
  border-bottom: ${(p) => (p.$line ? '1px solid #2b2b2b' : 'none')};
  color: #757575;
  font-size: 9.200px;
  font-weight: 700;
`;
const NameWrap = styled.span`
  display: flex;
  align-items: center;
  gap: 2px;
`;
const SearchField = styled.div`
  width: 101px;
  height: 14px;
  margin-left: 4px;
  background: #fff;
  color: #444;
  font-size: 9px;
  font-weight: 400;
  padding: 1px 0 0 3px;
  line-height: 12px;
`;
const FilterToggle = styled.div`
  width: 7px;
  height: 13px;
  margin-left: 3px;
  background: linear-gradient(#d8254a 0 50%, #222 50%);
`;
const DimField = styled.div`
  width: 28px;
  height: 14px;
  margin-left: ${(p) => p.$ml || 4}px;
  background: #333;
  color: #565656;
  font-weight: 400;
  font-size: 9.500px;
  padding: 1px 0 0 3px;
  line-height: 12px;
`;
const DimStep = styled.div`
  width: 12px;
  height: 14px;
  margin-left: 2px;
  background: #474747;
  color: #7a7a7a;
  display: flex;
  align-items: center;
  justify-content: center;
`;
const LockSlot = styled.div`
  width: 17.500px;
  display: flex;
  justify-content: center;
  color: #707070;
  flex: none;
`;
const ListWrap = styled.div`
  flex: 1;
  min-height: 0;
  display: flex;
`;
const LayerList = styled.div`
  flex: 1;
  min-width: 0;
`;
const LayerRow = styled.div`
  position: relative;
  height: 19.200px;
  display: flex;
  align-items: center;
  color: #d0d0d0;
  font-size: 8.400px;
  white-space: nowrap;
`;
const EyeCell = styled.div`
  width: 26px;
  height: 100%;
  flex: none;
  display: flex;
  align-items: center;
  justify-content: center;
  color: #a9a9a9;
  background: #3a3a3a;
  border-right: 1px solid #2e2e2e;
  border-bottom: 1px solid #282828;
`;
const LayerMain = styled.div`
  flex: 1;
  height: 100%;
  display: flex;
  align-items: center;
  padding-left: 15px;
  background: ${(p) => (p.$sel ? '#4c5268' : '#383838')};
  border-bottom: 1px solid #262626;
`;
const Thumb = styled.div`
  position: relative;
  width: 25px;
  height: 14px;
  flex: none;
  display: flex;
  margin-right: 6px;
  color: #c9c9c9;
  &::before {
    content: '';
    display: ${(p) => (p.$sel ? 'block' : 'none')};
    position: absolute;
    inset: -2px;
    border: 1px solid #e4e4e4;
  }
  &::after {
    content: '';
    display: ${(p) => (p.$sel ? 'block' : 'none')};
    position: absolute;
    inset: -2px 6px;
    background: #4c5268;
  }
`;
const ThumbChecks = styled.div`
  position: relative;
  z-index: 1;
  width: 15px;
  height: 14px;
  flex: none;
  background-color: #f1f1f1;
  background-image: conic-gradient(#d9d9d9 25%, #f4f4f4 0 50%, #d9d9d9 0 75%, #f4f4f4 0);
  background-size: 4px 4px;
  border-top: 1px solid #111;
`;
const ThumbDot = styled.i`
  position: absolute;
  left: ${(p) => p.$x}px;
  top: ${(p) => p.$y}px;
  width: ${(p) => p.$s}px;
  height: ${(p) => p.$s}px;
  background: #d8173a;
`;
const ThumbLink = styled.div`
  position: relative;
  z-index: 1;
  flex: 1;
  padding: 2px 0 0 1px;
  border-top: 1px solid #e8e8e8;
`;
const CursorHand = styled.div`
  position: absolute;
  left: 6px;
  top: 4px;
`;
const ScrollTrack = styled.div`
  width: 12px;
  flex: none;
  background: #3a3a3a;
  padding: 2px 0 0 2px;
`;
const ScrollThumb = styled.div`
  width: 7px;
  height: 176px;
  border-radius: 3px;
  background: #5a5a5a;
`;
const LayersFooter = styled.div`
  height: 19px;
  flex: none;
  display: flex;
  align-items: center;
  justify-content: flex-end;
  gap: 6.700px;
  padding-right: 21px;
  background: #3a3a3a;
  color: #a0a0a0;
  border-top: 1px solid #2a2a2a;
`;
const FxFoot = styled.span`
  font-family: 'Liberation Serif', serif;
  font-style: italic;
  font-size: 13px;
  width: 15px;
  text-align: center;
`;

const menuNames = ['File', 'Edit', 'Image', 'Layer', 'Type', 'Select', 'Filter', '3D', 'View', 'Window', 'Help'];
const alignIcons = [
  ['a1', 'a2', 'a3', 'a4', 'a5', 'a6'],
  ['d1', 'd2', 'd3', 'h1', 'h2', 'h3'],
];
const hLabels = ['400', '300', '200', '100', '0', '100', '200', '300', '400', '500', '600', '700', '800', '900', '1000', '1100', '1200', '1300', '1400', '1500'];
const vLabels = ['500', '400', '300', '200', '100', '0', '100', '200', '300', '400', '500', '600', '700', '800', '900', '1'];
const toolGroups = [
  [['move', true], ['marquee', 1], ['lasso', 1], ['quick', 1], ['crop', 1], ['eyedrop', 1]],
  [['heal', 1], ['brush', 1], ['stamp', 1], ['historyB', 1], ['eraser', 1], ['bucket', 1], ['blur', 1], ['smudge', 1]],
  [['pen', 1], ['type', 1], ['direct', 1], ['rectT', 1]],
  [['hand', 1], ['smudge', 0]],
];
const tileList = [
  ['circle', 24], ['circle', 48], ['lasso', 24], ['lasso', 48], ['magnet', 24], ['magnet', 48], ['move', 24], ['move', 48],
  ['poly', 24], ['poly', 48], ['rect', 24], ['rect', 48], ['col', 24], ['col', 48], ['row', 24], ['row', 48],
  ['type', 24], ['type', 48, true],
];
const customTools = [
  ['ctCross', 1], ['ct3d'], ['ctStar'], ['ctX'], ['ctGrid'], ['ctChev', 1], ['ctMirH'], ['ctMirV'], ['ctDoc'], ['ctDim', 1],
  ['ctI'], ['ctPie'], ['ctFold'], ['fx'], ['ctI2'], ['ctRect'], ['ctRot'], ['ctFwd'], ['svg'], ['ctMeasure'], ['ctSq'], ['ctT'], ['ctTable'], ['ctDia'],
];
const adjRows = [
  { pl: 30, items: ['adjSun', 'adjLevels', 'adjCurves', 'adjExpo', 'adjVib'] },
  { pl: 20, items: ['adjHue', 'adjBal', 'adjBW', 'adjPhoto', 'adjMixer', 'adjLUT'] },
  { pl: 30, items: ['adjInv', 'adjPost', 'adjThresh', 'adjMap', 'adjGrad'] },
];
const layers = [
  { name: '#Vertical_Type_Tool@2X', sel: true, dot: [5, 8, 2] },
  { name: '#Vertical_Type_Tool', dot: [2, 10, 1] },
  { name: '#Single_Row_Marquee_Tool@2X' },
  { name: '#Single_Row_Marquee_Tool' },
  { name: '#Single_Column_Marquee_Tool@2X' },
  { name: '#Single_Column_Marquee_Tool' },
  { name: '#Rectangular_Marquee_Tool@2X', dot: [9, 4, 3] },
  { name: '#Rectangular_Marquee_Tool', dot: [7, 6, 1] },
  { name: '#Polygonal_Lasso_Tool@2X', dot: [4, 5, 3] },
  { name: '#Polygonal_Lasso_Tool', dot: [1, 6, 1] },
  { name: '#Move_tool@2X' },
  { name: '#Move_tool' },
  { name: '#Magnetic_Lasso_Tool@2X' },
];

export default function App() {
  return (
    <>
      <GlobalStyle />
      <Screen>
        <MenuBar>
          <Icon name="apple" w={12} h={15} vw={15} vh={17} c="#222" />
          <MenuItem $bold $gap={15}>Photoshop</MenuItem>
          {menuNames.map((m) => (
            <MenuItem key={m}>{m}</MenuItem>
          ))}
          <MenuRight>
            <Icon name="rec" w={16} h={16} />
            <Icon name="cc" w={17} h={16} vw={16} />
            <Icon name="airplay" w={17} h={16} />
            <Icon name="wifi" w={18} h={16} />
            <Icon name="battery" w={19} h={16} />
            <Icon name="clock" w={16} h={16} />
            <MenuItem $gap={4} $after={9}>pspt</MenuItem>
            <Icon name="search" w={16} h={16} />
            <Icon name="list" w={17} h={16} />
          </MenuRight>
        </MenuBar>

        <TitleBar>
          <Lights>
            <Light $c="#f0475e" />
            <Light $c="#f7b93e" />
            <Light $c="#36d04f" />
          </Lights>
          Adobe Photoshop CC 2014
        </TitleBar>

        <OptionsBar>
          <VGrip />
          <Icon name="move" w={20} h={18} vw={20} c="#a8a8a8" />
          <AlignSlot $w={12} $c="#a8a8a8">
            <Icon name="down" w={6} h={4} />
          </AlignSlot>
          <OptSep $m="0 6px 0 1px" />
          <Check />
          <OptLabel $mr={6}>Auto-Select:</OptLabel>
          <Select $w={43}>
            Group
            <Icon name="updown" w={6} h={8} />
          </Select>
          <OptSep $m="0 4px" />
          <Check />
          <OptLabel>Show Transform Controls</OptLabel>
          <OptSep $m="0 3px 0 4px" />
          {alignIcons[0].map((n, i) => (
            <AlignSlot key={n} $ml={i === 3 ? 3 : 0}>
              <Icon name={n} w={18} h={15} sw={1} />
            </AlignSlot>
          ))}
          <OptSep $m="0 2px" />
          {alignIcons[1].map((n, i) => (
            <AlignSlot key={n} $ml={i === 3 ? 3 : 0}>
              <Icon name={n} w={18} h={15} sw={1} />
            </AlignSlot>
          ))}
          <OptSep $m="0 2px" />
          <AlignSlot>
            <Icon name="d4" w={18} h={15} sw={1} />
          </AlignSlot>
          <OptSep $m="0 5px 0 2px" />
          <OptLabel $c="#6e6e6e" $mr={8}>3D Mode:</OptLabel>
          {['m1', 'm2', 'm3', 'm4', 'm5'].map((n) => (
            <AlignSlot key={n} $c="#666">
              <Icon name={n} w={18} h={15} sw={1} />
            </AlignSlot>
          ))}
          <Select $w={97} $ml={305}>
            Essentials
            <Icon name="updown" w={6} h={8} />
          </Select>
        </OptionsBar>

        <Workspace>
          <ToolColumn>
            <CollapseStrip>
              <Icon name="dblR" w={7} h={5} />
            </CollapseStrip>
            <ToolBody>
              <HGrip $m="2px 0 6px 8px" />
              {toolGroups.map((group, gi) => (
                <ToolGroup key={gi} $last={gi === 3}>
                  {group.map(([name, fly], i) => (
                    <ToolBtn key={i} $active={fly === true} $fly={fly === 1} $h={gi === 3 ? 20 : 21}>
                      {name === 'type' ? <ToolSerif>T</ToolSerif> : <Icon name={name} w={gi === 3 && i === 1 ? 16 : 17} h={gi === 3 && i === 1 ? 16 : 17} vw={18} vh={18} />}
                    </ToolBtn>
                  ))}
                </ToolGroup>
              ))}
              <MiniSwatchRow>
                <MiniDefault />
                <Icon name="swap" w={9} h={9} vw={12} vh={12} />
              </MiniSwatchRow>
              <SwatchStack $w={23} $h={25} $m="3.500px 0 0 4px">
                <SwatchFg $s={15} />
                <SwatchBg $s={15} />
              </SwatchStack>
              <ToolBtn>
                <Icon name="qmask" w={15} h={15} vw={18} vh={18} />
              </ToolBtn>
              <ToolBtn $fly>
                <Icon name="screen" w={17} h={17} vw={18} vh={18} />
              </ToolBtn>
            </ToolBody>
          </ToolColumn>

          <Center>
            <TabRow>
              <DocTab>
                <TabX>×</TabX>
                Imported Layers @ 100% (#Vertical_Type_Tool@2X, RGB/8) *
              </DocTab>
            </TabRow>
            <HRulerRow>
              <RulerCorner />
              <HRuler>
                <HCell $first $w={32}>..</HCell>
                {hLabels.map((l, i) => (
                  <HCell key={i}>{l}</HCell>
                ))}
              </HRuler>
            </HRulerRow>
            <DocRow>
              <VRuler>
                {vLabels.map((l, i) => (
                  <VCell key={i}>
                    <VLabel>{l}</VLabel>
                  </VCell>
                ))}
              </VRuler>
              <DocArea>
                <Canvas>
                  {tileList.map(([name, size, clear], i) => (
                    <Tile key={i} $size={size} $clear={clear}>
                      <Sprite name={name} />
                    </Tile>
                  ))}
                </Canvas>
                <FloatPanel>
                  <FloatTop>
                    <span>×</span>
                    <Icon name="dblL" w={7} h={5} c="#aaa" />
                  </FloatTop>
                  <TabStrip $h={14}>
                    <PanelTab $on>Export</PanelTab>
                    <MenuSlot>
                      <Icon name="panelMenu" w={11} h={7} />
                    </MenuSlot>
                  </TabStrip>
                  <ExportBody>
                    H-Margin <Field>40</Field>
                    W-Margin <Field>40</Field>
                    <FloatSep $m="0 12px 0 5px" />
                    Columns <Field>8</Field>
                    <FloatSep $m="0 19px 0 5px" />
                    <PrimaryBtn>Create Sheet</PrimaryBtn>
                    <FloatSep $m="0 9px 0 16px" />
                    <RoundBtn />
                  </ExportBody>
                  <TabStrip $h={15}>
                    <PanelTab $on>Custom Tools</PanelTab>
                    <MenuSlot>
                      <Icon name="panelMenu" w={11} h={7} />
                    </MenuSlot>
                  </TabStrip>
                  <CustomRow>
                    {customTools.map(([n, dim], i) => (
                      <CustomBtn key={i} $dim={dim}>
                        {n === 'fx' ? <FxWord>fx</FxWord> : n === 'svg' ? <SvgWord>SVG</SvgWord> : <Icon name={n} w={17} h={17} vw={18} vh={18} />}
                      </CustomBtn>
                    ))}
                  </CustomRow>
                  <HGrip $w={16} $m="3px 0 0 348px" />
                </FloatPanel>
              </DocArea>
            </DocRow>
            <StatusBar>
              <StatusLeft>
                <StatusZoom>100%</StatusZoom>
                <Icon name="exportI" w={14} h={11} vw={15} vh={12} />
                <StatusDoc>Doc: 1.61M/28.9M</StatusDoc>
                <Icon name="play" w={7} h={9} />
              </StatusLeft>
            </StatusBar>
          </Center>

          <Dock>
            <CollapseStrip $justify="space-between" $pl={22}>
              <Icon name="dblL" w={7} h={5} />
              <Icon name="dblR" w={7} h={5} />
            </CollapseStrip>
            <DockRows>
              <IconDock>
                <IconDockGroup>
                  <HGrip $m="3px 0 5px 0" />
                  <Icon name="hist" w={16} h={16} />
                </IconDockGroup>
                <IconDockGroup>
                  <HGrip $m="3px 0 5px 0" />
                  <Icon name="props" w={15} h={15} />
                </IconDockGroup>
              </IconDock>
              <Panels>
                <TabStrip $h={13}>
                  <PanelTab $on $w={33}>Color</PanelTab>
                  <PanelTab $w={50}>Swatches</PanelTab>
                  <MenuSlot>
                    <Icon name="panelMenu" w={11} h={7} />
                  </MenuSlot>
                </TabStrip>
                <ColorBody>
                  <SwatchStack $w={23} $h={23} $m="3px 0 0 0">
                    <SwatchFg $s={15} />
                    <SwatchBg $s={15} />
                  </SwatchStack>
                  <GradField>
                    <PickerRing />
                  </GradField>
                  <HueBar />
                </ColorBody>
                <TabStrip $h={15}>
                  <PanelTab $on $w={63}>Adjustments</PanelTab>
                  <PanelTab $w={35}>Styles</PanelTab>
                  <MenuSlot>
                    <Icon name="panelMenu" w={11} h={7} />
                  </MenuSlot>
                </TabStrip>
                <AdjustBody>
                  <AdjustTitle>Add an adjustment</AdjustTitle>
                  {adjRows.map((r, i) => (
                    <AdjustRow key={i} $pl={r.pl}>
                      {r.items.map((n) => (
                        <Icon key={n} name={n} w={16} h={16} vw={18} vh={18} />
                      ))}
                    </AdjustRow>
                  ))}
                </AdjustBody>
                <TabStrip $h={15}>
                  <PanelTab $on $w={38}>Layers</PanelTab>
                  <PanelTab $w={47}>Channels</PanelTab>
                  <PanelTab $w={32}>Paths</PanelTab>
                  <MenuSlot>
                    <Icon name="panelMenu" w={11} h={7} />
                  </MenuSlot>
                </TabStrip>
                <LayersBody>
                  <FilterRow $h={21.5} $line>
                    <Select $w={69} $h={14}>
                      <NameWrap>
                        <Icon name="search" w={9} h={9} vw={16} vh={16} />
                        Name
                      </NameWrap>
                      <Icon name="updown" w={6} h={8} />
                    </Select>
                    <SearchField>#</SearchField>
                    <FilterToggle />
                  </FilterRow>
                  <FilterRow $h={22} $line>
                    <Select $off $w={101} $h={14}>
                      Normal
                      <Icon name="updown" w={6} h={8} />
                    </Select>
                    <OptLabel $ml={4} $mr={5}>Opacity:</OptLabel>
                    <DimField>100%</DimField>
                    <DimStep>
                      <Icon name="down" w={6} h={4} />
                    </DimStep>
                  </FilterRow>
                  <FilterRow $h={25} $pb={2} $pl={4}>
                    <OptLabel>Lock:</OptLabel>
                    <LockSlot><Icon name="checker" w={15} h={15} /></LockSlot>
                    <LockSlot><Icon name="lockBrush" w={15} h={15} /></LockSlot>
                    <LockSlot><Icon name="lockMove" w={15} h={15} /></LockSlot>
                    <LockSlot><Icon name="lock" w={15} h={15} /></LockSlot>
                    <OptLabel $ml={33}>Fill:</OptLabel>
                    <DimField>100%</DimField>
                    <DimStep>
                      <Icon name="down" w={6} h={4} />
                    </DimStep>
                  </FilterRow>
                  <ListWrap>
                    <LayerList>
                      {layers.map((l) => (
                        <LayerRow key={l.name}>
                          <EyeCell>
                            <Icon name="eye" w={14} h={12} />
                          </EyeCell>
                          <LayerMain $sel={l.sel}>
                            <Thumb $sel={l.sel}>
                              <ThumbChecks>
                                {l.dot && <ThumbDot $x={l.dot[0]} $y={l.dot[1]} $s={l.dot[2]} />}
                              </ThumbChecks>
                              <ThumbLink>
                                <Icon name="mini" w={9} h={10} vw={10} vh={12} />
                              </ThumbLink>
                            </Thumb>
                            {l.name}
                          </LayerMain>
                          {l.sel && (
                            <CursorHand>
                              <Icon name="handCur" w={13} h={15} vw={13} vh={15} />
                            </CursorHand>
                          )}
                        </LayerRow>
                      ))}
                    </LayerList>
                    <ScrollTrack>
                      <ScrollThumb />
                    </ScrollTrack>
                  </ListWrap>
                  <LayersFooter>
                    <Icon name="link" w={15} h={13} />
                    <FxFoot>fx</FxFoot>
                    <Icon name="mask" w={15} h={15} />
                    <Icon name="half" w={15} h={15} />
                    <Icon name="folder" w={15} h={15} />
                    <Icon name="fresh" w={15} h={15} />
                    <Icon name="trash" w={15} h={15} />
                  </LayersFooter>
                </LayersBody>
              </Panels>
            </DockRows>
          </Dock>
        </Workspace>
      </Screen>
    </>
  );
}
